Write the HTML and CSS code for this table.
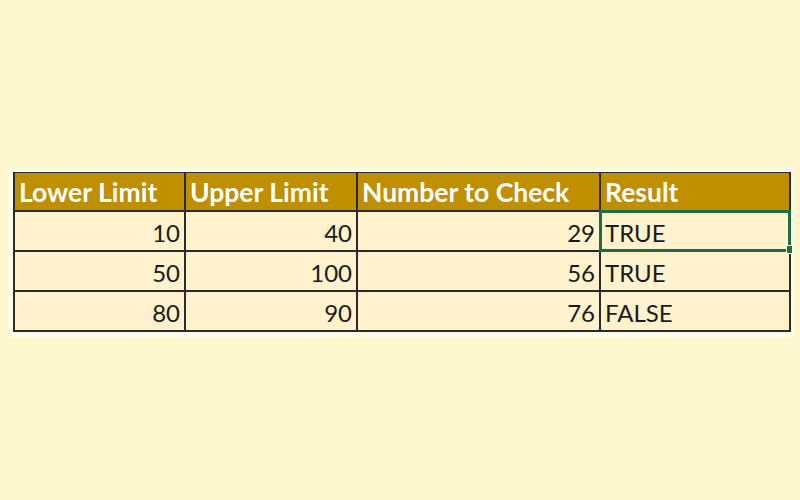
FILE: index.html
```html
<!DOCTYPE html>
<html>
<head>
<meta charset="utf-8">
<link rel="stylesheet" href="styles.css">
</head>
<body>
<div class="sheet">
  <table class="grid">
    <colgroup>
      <col class="c1"><col class="c2"><col class="c3"><col class="c4">
    </colgroup>
    <thead>
      <tr>
        <th>Lower Limit</th>
        <th>Upper Limit</th>
        <th>Number to Check</th>
        <th>Result</th>
      </tr>
    </thead>
    <tbody>
      <tr>
        <td class="num">10</td>
        <td class="num">40</td>
        <td class="num">29</td>
        <td class="txt selected">TRUE<span class="sel-box"><span class="sel-handle"></span></span></td>
      </tr>
      <tr>
        <td class="num">50</td>
        <td class="num">100</td>
        <td class="num">56</td>
        <td class="txt">TRUE</td>
      </tr>
      <tr>
        <td class="num">80</td>
        <td class="num">90</td>
        <td class="num">76</td>
        <td class="txt">FALSE</td>
      </tr>
    </tbody>
  </table>
</div>
</body>
</html>
```

FILE: styles.css
```css
html, body {
  margin: 0;
  padding: 0;
}
body {
  width: 800px;
  height: 500px;
  background: #fef7cb;
  overflow: hidden;
  font-family: "Lato", "Open Sans", sans-serif;
}
.sheet {
  margin: 168px 7px 0 8px;
  padding: 4px 2px 5px 5px;
  background: #fffcea;
}
.grid {
  border-collapse: collapse;
  table-layout: fixed;
  width: 778px;
}
.c1 { width: 171px; }
.c2 { width: 172px; }
.c3 { width: 243px; }
.c4 { width: 190px; }
.grid th {
  background: #bf8f00;
  color: #ffffff;
  font-weight: 700;
  font-size: 26.5px;
  text-align: left;
  height: 38px;
  padding: 0 4px 4px;
  border: 2px solid #2a2a2a;
  border-top-width: 1px;
  box-sizing: border-box;
  line-height: 1;
  vertical-align: bottom;
  white-space: nowrap;
}
.grid td {
  background: #fff2cc;
  color: #1a1a1a;
  font-size: 24px;
  height: 40px;
  padding: 0 4px 5px;
  border: 2px solid #2a2a2a;
  box-sizing: border-box;
  line-height: 1;
  vertical-align: bottom;
  white-space: nowrap;
}
.grid td.num { text-align: right; }
.grid td.txt { text-align: left; }
.selected { position: relative; }
.sel-box {
  position: absolute;
  left: -2px;
  top: -2px;
  right: -2px;
  bottom: -2px;
  border: 3px solid #1f6e43;
  pointer-events: none;
}
.sel-handle {
  position: absolute;
  right: -5px;
  bottom: -5px;
  width: 5px;
  height: 7px;
  background: #1f6e43;
  border: 1px solid #fffcea;
}
```
